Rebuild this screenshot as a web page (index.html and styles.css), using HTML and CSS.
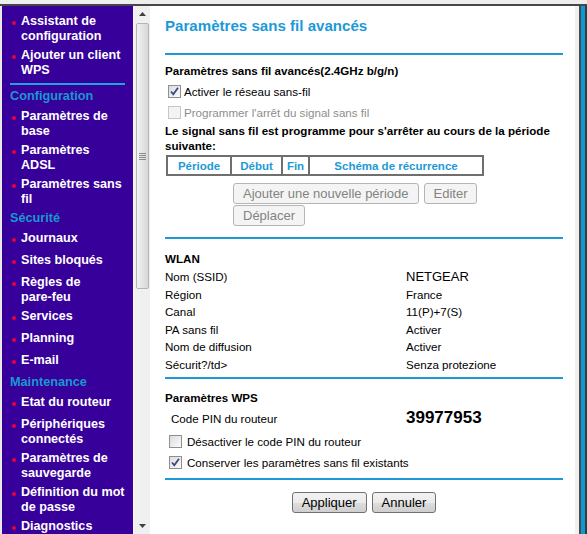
FILE: index.html
```html
<!DOCTYPE html>
<html lang="fr">
<head>
<meta charset="utf-8">
<title>Paramètres sans fil avancés</title>
<link rel="stylesheet" href="styles.css">
</head>
<body>
<div class="topbar"></div>
<div class="frames">
  <div class="navframe">
    <nav class="menu">
      <ul>
        <li class="item">Assistant de configuration</li>
        <li class="item">Ajouter un client WPS</li>
      </ul>
      <div class="sep"></div>
      <div class="head">Configuration</div>
      <ul>
        <li class="item">Paramètres de base</li>
        <li class="item">Paramètres ADSL</li>
        <li class="item">Paramètres sans fil</li>
      </ul>
      <div class="head">Sécurité</div>
      <ul>
        <li class="item">Journaux</li>
        <li class="item">Sites bloqués</li>
        <li class="item">Règles de <span class="nowrap">pare-feu</span></li>
        <li class="item">Services</li>
        <li class="item">Planning</li>
        <li class="item">E-mail</li>
      </ul>
      <div class="head">Maintenance</div>
      <ul>
        <li class="item">Etat du routeur</li>
        <li class="item">Périphériques connectés</li>
        <li class="item">Paramètres de sauvegarde</li>
        <li class="item">Définition du mot de passe</li>
        <li class="item">Diagnostics</li>
      </ul>
    </nav>
    <div class="vscroll">
      <div class="sbtn"><svg width="7" height="4" viewBox="0 0 7 4"><path d="M0 4 L3.5 0 L7 4 Z" fill="#404040"/></svg></div>
      <div class="thumb">
        <div class="grip"><span></span><span></span><span></span><span></span></div>
      </div>
      <div class="track"></div>
      <div class="sbtn"><svg width="7" height="4" viewBox="0 0 7 4"><path d="M0 0 L3.5 4 L7 0 Z" fill="#404040"/></svg></div>
    </div>
  </div>

  <main class="content">
    <h1 class="title">Paramètres sans fil avancés</h1>
    <div class="rule rule-top"></div>

    <div class="sect-head">Paramètres sans fil avancés(2.4GHz b/g/n)</div>
    <div class="cbrow cbrow-a cbrow-top">
      <span class="cb"><svg width="11" height="11" viewBox="0 0 11 11"><path d="M2 5.5 L4.3 8.3 L9 1.8" fill="none" stroke="#3a4a80" stroke-width="1.8"/></svg></span>
      <span>Activer le réseau sans-fil</span>
    </div>
    <div class="cbrow cbrow-a disabled">
      <span class="cb cb-dis"></span>
      <span>Programmer l'arrêt du signal sans fil</span>
    </div>
    <div class="note">Le signal sans fil est programme pour s'arrêter au cours de la période suivante:</div>

    <table class="sched">
      <tr>
        <th class="c1">Période</th>
        <th class="c2">Début</th>
        <th class="c3">Fin</th>
        <th class="c4">Schéma de récurrence</th>
      </tr>
    </table>

    <div class="btnrows">
      <div class="btnrow">
        <button class="btn" disabled>Ajouter une nouvelle période</button>
        <button class="btn" disabled>Editer</button>
      </div>
      <div class="btnrow">
        <button class="btn" disabled>Déplacer</button>
      </div>
    </div>

    <div class="rule rule-2"></div>

    <div class="sect-head wlan-head">WLAN</div>
    <div class="kv">
      <div>Nom (SSID)</div><div class="big">NETGEAR</div>
      <div>Région</div><div>France</div>
      <div>Canal</div><div>11(P)+7(S)</div>
      <div>PA sans fil</div><div>Activer</div>
      <div>Nom de diffusion</div><div>Activer</div>
      <div>Sécurit?/td&gt;</div><div>Senza protezione</div>
    </div>

    <div class="rule rule-3"></div>

    <div class="sect-head wps-head">Paramètres WPS</div>
    <div class="pinrow">
      <div class="pinlabel">Code PIN du routeur</div>
      <div class="pin">39977953</div>
    </div>
    <div class="cbrow cbrow-b cbrow-first">
      <span class="cb"></span>
      <span>Désactiver le code PIN du routeur</span>
    </div>
    <div class="cbrow cbrow-b">
      <span class="cb"><svg width="11" height="11" viewBox="0 0 11 11"><path d="M2 5.5 L4.3 8.3 L9 1.8" fill="none" stroke="#3a4a80" stroke-width="1.8"/></svg></span>
      <span>Conserver les paramètres sans fil existants</span>
    </div>

    <div class="rule rule-4"></div>

    <div class="actions">
      <button class="btn btn-on">Appliquer</button>
      <button class="btn btn-on">Annuler</button>
    </div>
  </main>

  <div class="rightedge"></div>
</div>
</body>
</html>
```

FILE: styles.css
```css
html, body {
  margin: 0;
  padding: 0;
}
body {
  width: 587px;
  height: 534px;
  overflow: hidden;
  background: #ffffff;
  font-family: "Liberation Sans", Arial, sans-serif;
  font-size: 11.6px;
  color: #000;
}
.topbar {
  height: 4px;
  background: #eeeeee;
  border-bottom: 2px solid #474747;
}
.frames {
  display: flex;
  height: 528px;
}

/* left navigation frame */
.navframe {
  display: flex;
  width: 148px;
  padding-left: 2px;
  background: #e9e9e9;
  flex: none;
}
.menu {
  width: 131px;
  background: #37009a;
  overflow: hidden;
  padding-top: 6px;
  box-sizing: border-box;
  font-size: 12.6px;
  font-weight: bold;
  color: #ffffff;
}
.menu ul {
  list-style: none;
  margin: 0;
  padding: 0;
}
.item {
  position: relative;
  padding: 2px 7px 2px 19px;
  line-height: 15px;
  min-height: 18px;
}
.item::before {
  content: "";
  position: absolute;
  left: 10px;
  top: 9px;
  width: 4px;
  height: 4px;
  border-radius: 50%;
  background: #e8003a;
}
.nowrap {
  white-space: nowrap;
}
.sep {
  height: 2px;
  margin: 3px 8px 2px 8px;
  background: #1ea3da;
}
.head {
  padding: 1px 0 3px 8px;
  line-height: 16px;
  font-size: 12.7px;
  color: #1898d0;
}

/* nav scrollbar */
.vscroll {
  width: 16px;
  border-left: 1px solid #f7f7f7;
  background: #f0f0f0;
  display: flex;
  flex-direction: column;
  flex: none;
}
.sbtn {
  height: 16px;
  display: flex;
  align-items: center;
  justify-content: center;
  flex: none;
}
.thumb {
  height: 266px;
  margin: 1px 1px 0 2px;
  border: 1px solid #b4b4b4;
  border-radius: 2px;
  background: linear-gradient(to right, #f2f2f2, #e4e4e4 50%, #d8d8d8);
  box-sizing: border-box;
  display: flex;
  align-items: center;
  justify-content: center;
  flex: none;
}
.grip {
  display: flex;
  flex-direction: column;
  gap: 1px;
}
.grip span {
  display: block;
  width: 7px;
  height: 1px;
  background: #8a8a8a;
}
.track {
  flex: 1;
}

/* main content */
.content {
  flex: 1;
  padding: 10px 12px 0 15px;
  overflow: hidden;
}
.title {
  margin: 0;
  font-size: 15.1px;
  line-height: 20px;
  font-weight: bold;
  color: #1d9ad6;
}
.rule {
  height: 2px;
  background: #1d9ad6;
}
.rule-top { margin-top: 17px; }
.rule-2 { margin-top: 11px; }
.rule-3 { margin-top: 4px; }
.rule-4 { margin-top: 5px; }

.sect-head {
  font-weight: bold;
  line-height: 16px;
  margin-top: 8px;
}
.wlan-head {
  line-height: 18px;
  margin-top: 11px;
}
.wps-head {
  line-height: 18px;
  margin-top: 10px;
}

.cbrow {
  display: flex;
  align-items: center;
  height: 21px;
}
.cbrow-top {
  margin-top: 2px;
}
.cbrow-a {
  padding-left: 3px;
}
.cbrow-a .cb {
  margin-right: 3px;
}
.cbrow-b {
  padding-left: 4px;
}
.cbrow-b .cb {
  margin-right: 5px;
}
.cbrow-first {
  margin-top: 2px;
}
.cb {
  width: 13px;
  height: 13px;
  box-sizing: border-box;
  border: 1px solid #8f8f8f;
  background: linear-gradient(135deg, #dcdcdc, #fbfbfb);
  display: flex;
  align-items: center;
  justify-content: center;
  flex: none;
}
.cb-dis {
  border-color: #c6c6c6;
  background: #f3f3f3;
}
.disabled {
  color: #8d8d8d;
}
.note {
  font-weight: bold;
  line-height: 15px;
}

.sched {
  margin-top: 2px;
  margin-left: 1px;
  width: 318px;
  height: 21px;
  border-collapse: collapse;
  border: 2px solid #6f6f6f;
  table-layout: fixed;
}
.sched th {
  padding: 0;
  height: 17px;
  border-left: 2px solid #6f6f6f;
  color: #1d9ad6;
  font-weight: bold;
  font-size: 11.5px;
  text-align: center;
}
.sched .c1 { width: 62px; }
.sched .c2 { width: 49px; }
.sched .c3 { width: 25px; }

.btnrows {
  margin-top: 7px;
  padding-left: 68px;
  display: flex;
  flex-direction: column;
  gap: 1px;
}
.btnrow {
  display: flex;
  gap: 5px;
}
.btn {
  height: 21px;
  padding: 0 9px;
  font-family: "Liberation Sans", Arial, sans-serif;
  font-size: 13px;
  border: 1px solid #b5b5b5;
  border-radius: 3px;
  background: #f4f4f4;
  color: #838383;
  margin: 0;
}
.btn-on {
  border-color: #707070;
  background: linear-gradient(#f2f2f2, #ebebeb 50%, #dddddd 51%, #cfcfcf);
  color: #000;
}

.kv {
  display: grid;
  grid-template-columns: 241px 1fr;
  grid-auto-rows: 17.5px;
  align-items: center;
}
.kv .big {
  font-size: 13px;
}

.pinrow {
  display: flex;
  align-items: center;
  height: 22px;
}
.pinlabel {
  width: 235px;
  padding-left: 6px;
}
.pin {
  font-size: 17px;
  font-weight: bold;
}

.actions {
  margin-top: 12px;
  display: flex;
  justify-content: center;
  gap: 5px;
}

.rightedge {
  width: 12px;
  flex: none;
  background: linear-gradient(to right, #f0f0f0 0 4px, #4a4a4a 4px 6px, #0a9bd6 6px 10px, #3a3a3a 10px 12px);
}
```
